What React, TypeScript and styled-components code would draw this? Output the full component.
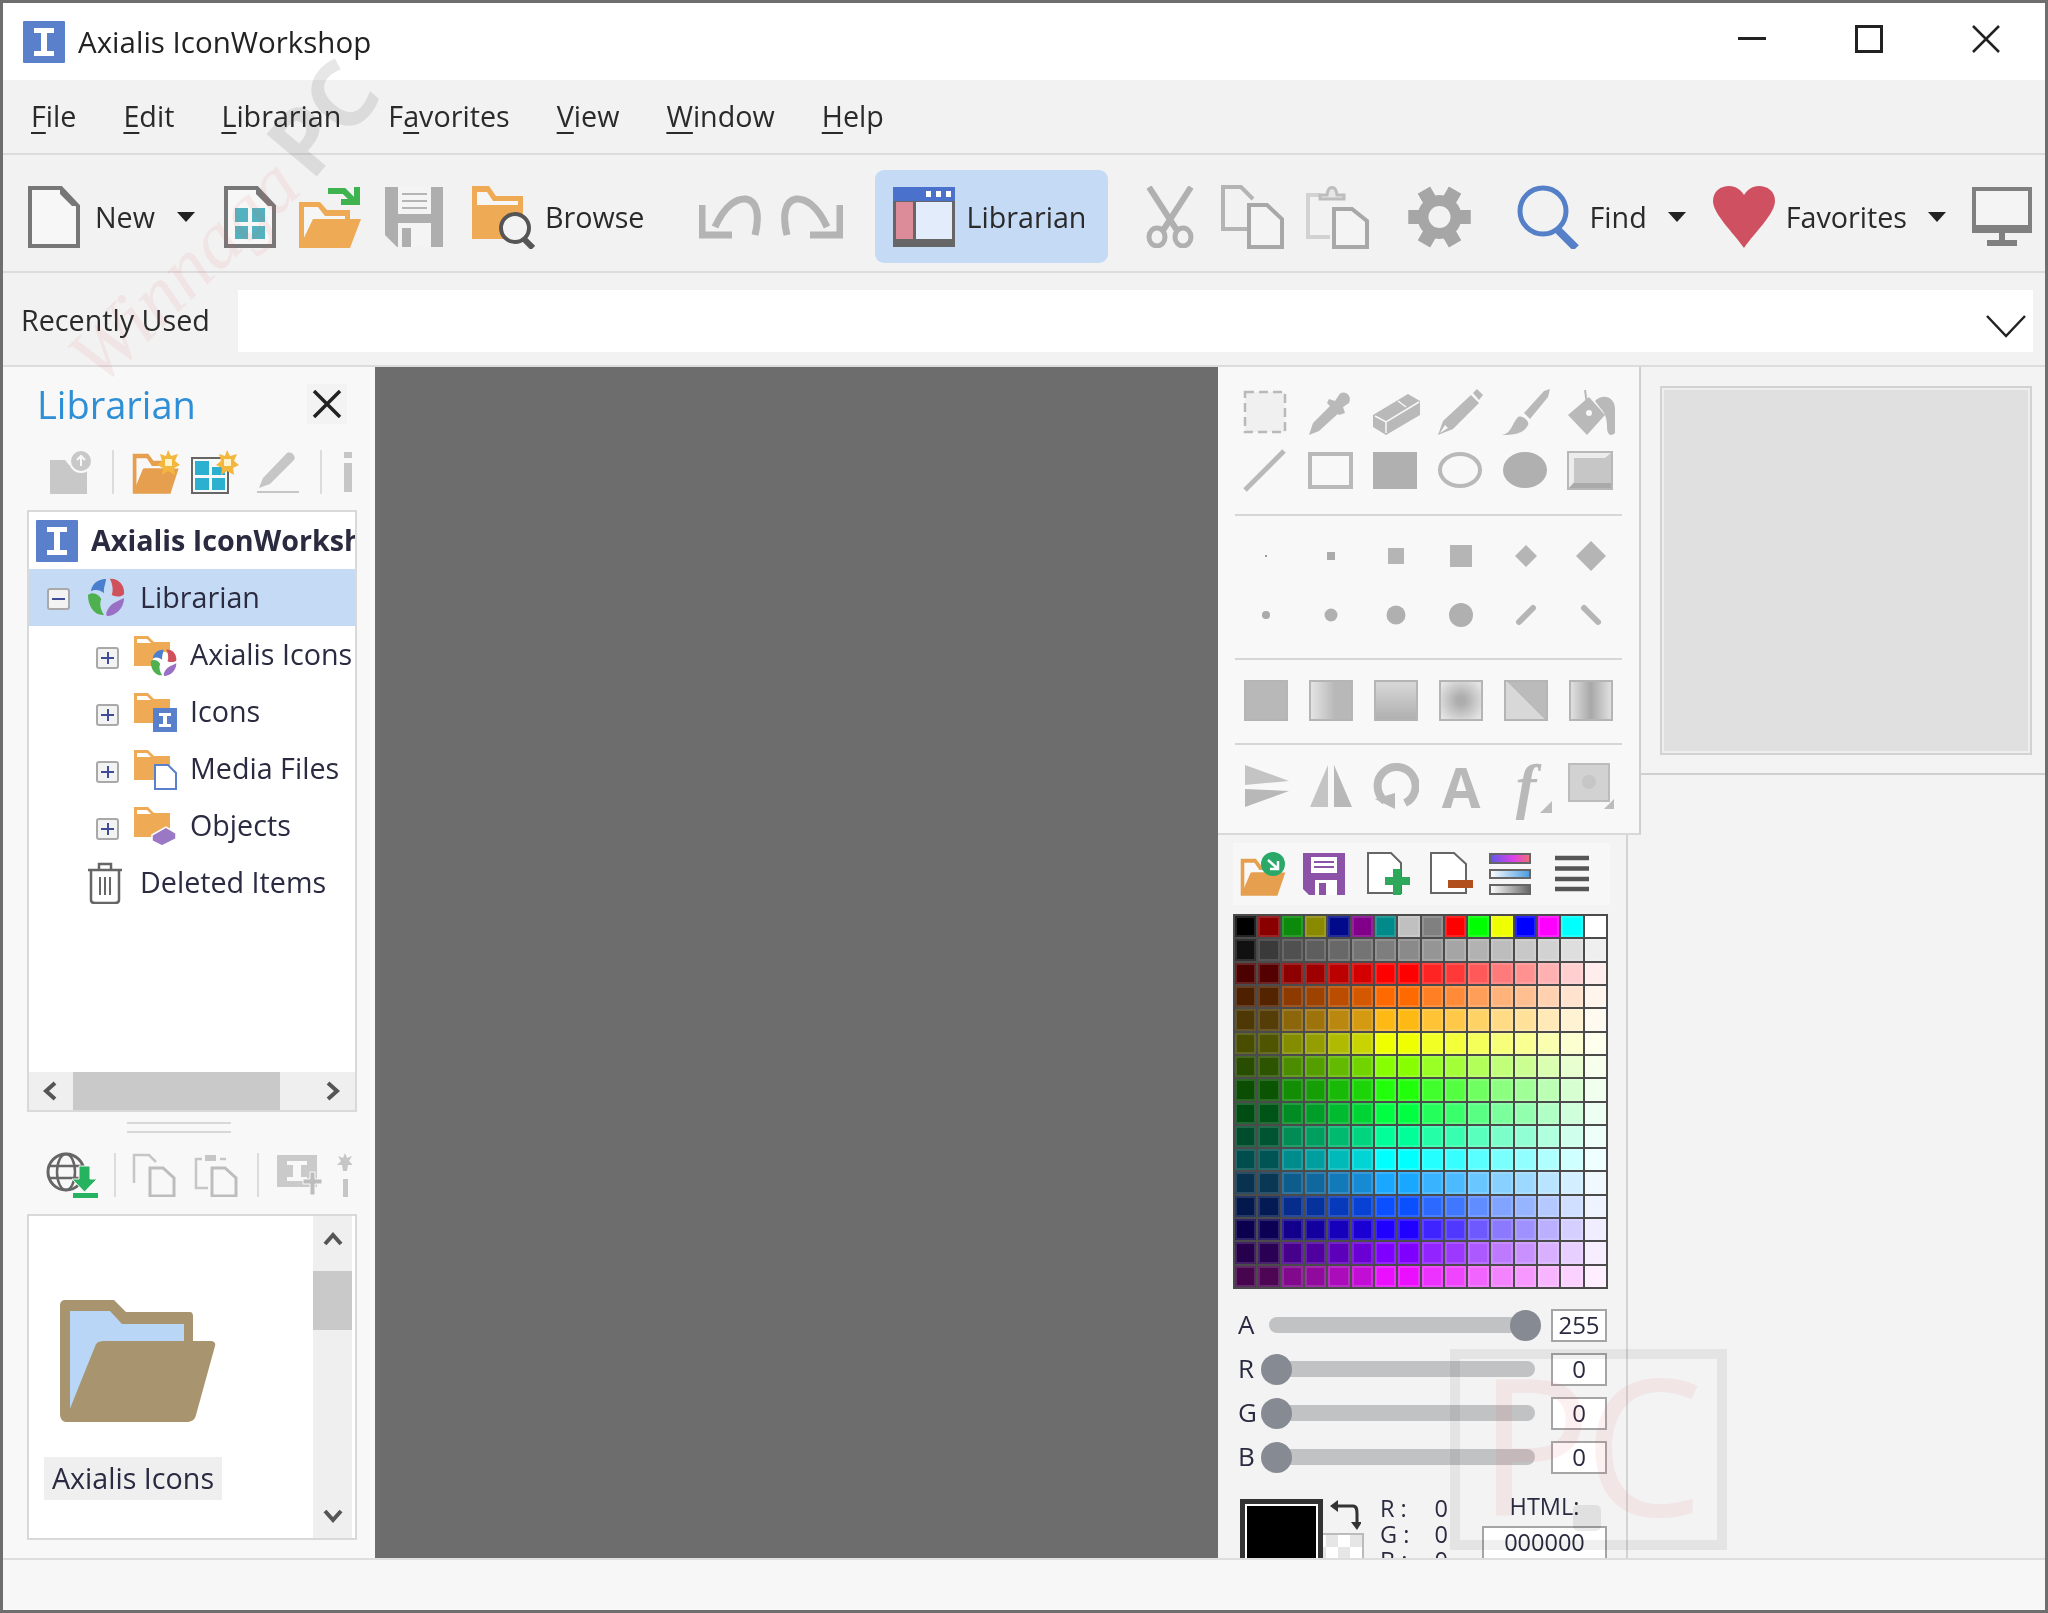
import React from "react";
import styled, { createGlobalStyle } from "styled-components";

const GlobalStyle = createGlobalStyle`
  html, body {
    margin: 0;
    padding: 0;
    width: 2048px;
    height: 1613px;
    overflow: hidden;
    background: #f3f3f3;
    font-family: "Open Sans", "Noto Sans", sans-serif;
    color: #222;
  }
  * { box-sizing: border-box; }
`;

type GlyphProps = { w: number; h: number; ml?: number; children: React.ReactNode };

const GlyphSvg = styled.svg<{ $ml: number }>`
  display: block;
  flex-shrink: 0;
  margin-left: ${({ $ml }) => $ml}px;
`;

const Glyph: React.FC<GlyphProps> = ({ w, h, ml = 0, children }) => (
  <GlyphSvg $ml={ml} width={w} height={h} viewBox={`0 0 ${w} ${h}`}>
    {children}
  </GlyphSvg>
);

const Logo: React.FC<{ size: number }> = ({ size }) => (
  <Glyph w={size} h={size}>
    <g transform={`scale(${size / 42})`}>
      <rect width="42" height="42" rx="1" fill="#5a80cc" />
      <path d="M11 7H31V12H24V30H31V35H11V30H18V12H11Z" fill="#fff" />
    </g>
  </Glyph>
);

const FolderOpen: React.FC<{ body: string; inner: string }> = ({ body, inner }) => (
  <>
    <path d="M1 1H22L29 9H52V47H1Z" fill={body} />
    <path d="M6 6H20L27 15H47V18H17L6 40Z" fill={inner} />
    <path d="M15 18H63L52 47H1Z" fill={body} />
  </>
);

const Swirl: React.FC<{ size: number }> = ({ size }) => (
  <g transform={`scale(${size / 40})`}>
    <path d="M20 1C15 1 6 3 4 14C9 11 15 13 18 16C17 10 20 5 20 1Z" fill="#4a7fd0" />
    <path d="M24 1C31 0 40 6 39 17C36 20 30 20 26 18C28 13 27 6 24 1Z" fill="#d0505c" />
    <path d="M1 18C6 14 12 17 15 22C13 27 14 33 18 39C8 40 1 30 1 18Z" fill="#4fb04f" />
    <path d="M39 21C39 32 30 40 21 40C19 37 22 33 24 30C27 26 33 24 39 21Z" fill="#9a70c4" />
  </g>
);

const DocShape: React.FC = () => (
  <>
    <path d="M2 2H33L50 20V60H2Z" fill="#f7f7f7" stroke="#777" strokeWidth="4" />
    <path d="M32 2L50 20H44L32 8Z" fill="#777" />
  </>
);

const NewIcon = () => (
  <Glyph w={52} h={62} ml={25}>
    <DocShape />
  </Glyph>
);

const TemplateIcon = () => (
  <Glyph w={52} h={62} ml={29}>
    <DocShape />
    <rect x="11" y="22" width="13" height="14" fill="#53b2bf" />
    <rect x="28" y="22" width="13" height="14" fill="#53b2bf" />
    <rect x="11" y="40" width="13" height="13" fill="#53b2bf" />
    <rect x="28" y="40" width="13" height="13" fill="#53b2bf" />
  </Glyph>
);

const OpenIcon = () => (
  <Glyph w={64} h={64} ml={22}>
    <g transform="translate(0 16)">
      <FolderOpen body="#efaa55" inner="#f6f6f6" />
    </g>
    <path d="M30 6H46L56 16" fill="none" stroke="#3fb34f" strokeWidth="6" />
    <path d="M43 20H62V2H56V14H43Z" fill="#3fb34f" />
  </Glyph>
);

const SaveIcon = () => (
  <Glyph w={58} h={60} ml={23}>
    <path d="M0 0H58V60H12L0 48Z" fill="#aeaeae" />
    <rect x="13" y="0" width="33" height="27" fill="#f4f4f4" />
    <path d="M17 7H42M17 14H42M17 21H42" stroke="#b5b5b5" strokeWidth="2" />
    <rect x="13" y="36" width="33" height="24" fill="#f4f4f4" />
    <rect x="17" y="41" width="9" height="19" fill="#aeaeae" />
  </Glyph>
);

const BrowseIcon = () => (
  <Glyph w={64} h={64} ml={28}>
    <path d="M1 1H18L25 11H52V54H1Z" fill="#efaa55" />
    <path d="M6 7H16L22 16H47V20H6Z" fill="#f6f6f6" />
    <circle cx="44" cy="43" r="14" fill="#f3f3f3" stroke="#555" strokeWidth="4" />
    <path d="M52 53L62 63" stroke="#555" strokeWidth="6" />
  </Glyph>
);

const UndoIcon: React.FC<{ flip?: boolean; ml: number }> = ({ flip, ml }) => (
  <Glyph w={63} h={44} ml={ml}>
    <g transform={flip ? "translate(63 0) scale(-1 1)" : undefined} fill="none" stroke="#b4b4b4">
      <path d="M16 32C26 10 38 3 47 4C58 6 61 20 56 40" strokeWidth="7" />
      <path d="M3 10V40H33" strokeWidth="7" />
    </g>
  </Glyph>
);

const LibrarianIcon = () => (
  <Glyph w={62} h={60}>
    <rect width="62" height="60" fill="#666" />
    <rect width="62" height="14" fill="#4a72cc" />
    <rect x="3" y="15" width="17" height="37" fill="#dc8b99" />
    <rect x="23" y="15" width="36" height="37" fill="#e3ecfb" />
    <path d="M33 4H38V10H33ZM43 4H48V10H43ZM53 4H58V10H53Z" fill="#fff" />
  </Glyph>
);

const ScissorsIcon = () => (
  <Glyph w={48} h={62} ml={38}>
    <g fill="none" stroke="#b0b0b0">
      <path d="M3 1L32 46M45 1L16 46" strokeWidth="6" />
      <ellipse cx="11" cy="51" rx="8" ry="9" strokeWidth="5" />
      <ellipse cx="37" cy="51" rx="8" ry="9" strokeWidth="5" />
    </g>
  </Glyph>
);

const CopyIcon = () => (
  <Glyph w={63} h={64} ml={27}>
    <path d="M28 44H2V2H20L32 14" fill="none" stroke="#b4b4b4" strokeWidth="4" />
    <path d="M28 20H46L61 34V62H28Z" fill="#f4f4f4" stroke="#a8a8a8" strokeWidth="4" />
  </Glyph>
);

const PasteIcon = () => (
  <Glyph w={63} h={64} ml={22}>
    <path d="M14 10H2V52H24" fill="none" stroke="#d2d2d2" strokeWidth="4" />
    <path d="M14 14H38V10H31C30 0 22 0 21 10H14Z" fill="#e6e6e6" stroke="#bdbdbd" strokeWidth="3" />
    <path d="M28 24H46L61 36V62H28Z" fill="#f4f4f4" stroke="#a8a8a8" strokeWidth="4" />
  </Glyph>
);

const GearIcon = () => (
  <Glyph w={63} h={62} ml={39}>
    <g transform="translate(31.5 31)" fill="#a6a6a6">
      {[0, 60, 120, 180, 240, 300].map((a) => (
        <rect key={a} x="-7" y="-31" width="14" height="62" transform={`rotate(${a + 30})`} />
      ))}
      <circle r="22" />
      <circle r="11" fill="#f2f2f2" />
    </g>
  </Glyph>
);

const FindIcon = () => (
  <Glyph w={63} h={64} ml={46}>
    <circle cx="26" cy="26" r="23" fill="none" stroke="#5580c8" strokeWidth="5" />
    <path d="M40 44L59 63" stroke="#5580c8" strokeWidth="8" />
  </Glyph>
);

const HeartIcon = () => (
  <Glyph w={62} h={62} ml={27}>
    <path d="M31 62C20 46 0 28 0 15C0 5 8 0 16 0C23 0 28 4 31 9C34 4 39 0 46 0C54 0 62 5 62 15C62 28 42 46 31 62Z" fill="#cf5060" />
  </Glyph>
);

const MonitorIcon = () => (
  <Glyph w={60} h={60} ml={26}>
    <rect x="2" y="2" width="56" height="42" fill="#f4f4f4" stroke="#808080" strokeWidth="4" />
    <rect y="38" width="60" height="8" fill="#808080" />
    <rect x="27" y="46" width="6" height="8" fill="#808080" />
    <rect x="15" y="53" width="30" height="6" fill="#808080" />
  </Glyph>
);

const TOOL = "#b9b9b9";

const drawTools: React.ReactNode[] = [
  <>
    <rect x="3" y="3" width="40" height="40" fill="#f0f0f0" stroke={TOOL} strokeWidth="2.5" strokeDasharray="9 5" />
  </>,
  <>
    <path d="M2 46L6 34L26 14L34 22L12 42Z" fill={TOOL} />
    <path d="M22 10L28 12L32 6C36 0 46 6 42 14L36 18L38 24L32 26L20 14Z" fill={TOOL} />
  </>,
  <>
    <path d="M1 26L36 5L48 12V26L14 46L1 38Z" fill={TOOL} />
    <path d="M3 27L14 33L47 13M14 33V44M26 12L34 18" stroke="#f8f8f8" strokeWidth="1.5" fill="none" />
  </>,
  <>
    <path d="M1 46L6 32L34 6L42 14L16 40Z" fill={TOOL} />
    <path d="M36 4L40 0L46 6L42 11Z" fill={TOOL} />
    <path d="M3 44L8 36L11 39Z" fill="#f8f8f8" />
  </>,
  <>
    <path d="M22 24L42 2L48 0L46 8L28 30Z" fill={TOOL} />
    <path d="M0 46C10 44 10 34 16 28C20 26 28 32 26 36C22 44 14 46 0 46Z" fill={TOOL} />
  </>,
  <>
    <path d="M1 26L22 8L38 26L20 46Z" fill={TOOL} />
    <path d="M28 12C36 4 48 8 48 20V44C44 48 40 46 40 38C40 30 38 24 34 20Z" fill={TOOL} />
    <path d="M18 1L21 22" stroke={TOOL} strokeWidth="2" />
    <circle cx="22" cy="24" r="3" fill="#f8f8f8" />
  </>,
  <>
    <path d="M3 42L42 3" stroke={TOOL} strokeWidth="5" />
  </>,
  <>
    <rect x="3" y="6" width="41" height="33" fill="none" stroke={TOOL} strokeWidth="4" />
  </>,
  <>
    <rect x="1" y="4" width="44" height="37" fill="#b0b0b0" />
  </>,
  <>
    <ellipse cx="23" cy="22" rx="20" ry="16" fill="none" stroke={TOOL} strokeWidth="4" />
  </>,
  <>
    <ellipse cx="23" cy="22" rx="22" ry="18" fill="#b0b0b0" />
  </>,
  <>
    <rect x="1" y="4" width="44" height="37" fill="#c6c6c6" />
    <path d="M1 4H45L38 10H7V34L1 41Z" fill="#ececec" />
    <path d="M1 41L7 35H45V41Z" fill="#aaa" />
    <rect x="1" y="4" width="44" height="37" fill="none" stroke="#b8b8b8" strokeWidth="2" />
  </>,
];

const brushTools: React.ReactNode[] = [
  <rect x="22" y="22" width="2" height="2" fill="#999" />,
  <rect x="19" y="19" width="8" height="8" fill="#ababab" />,
  <rect x="15" y="15" width="16" height="16" fill="#b5b5b5" />,
  <rect x="12" y="12" width="22" height="22" fill="#b5b5b5" />,
  <path d="M23 12L34 23L23 34L12 23Z" fill="#b5b5b5" />,
  <path d="M23 8L38 23L23 38L8 23Z" fill="#b5b5b5" />,
  <circle cx="23" cy="23" r="4" fill="#aaa" />,
  <circle cx="23" cy="23" r="6.5" fill="#b0b0b0" />,
  <circle cx="23" cy="23" r="9.5" fill="#b0b0b0" />,
  <circle cx="23" cy="23" r="12" fill="#b0b0b0" />,
  <path d="M16 30L30 16" stroke="#b5b5b5" strokeWidth="6" strokeLinecap="round" />,
  <path d="M16 16L30 30" stroke="#b5b5b5" strokeWidth="6" strokeLinecap="round" />,
];

const gradients = [
  "#b8b8b8",
  "linear-gradient(90deg, #e4e4e4, #b8b8b8 60%)",
  "linear-gradient(180deg, #d8d8d8, #b0b0b0)",
  "radial-gradient(circle, #adadad 15%, #e4e4e4 90%)",
  "linear-gradient(45deg, #d8d8d8 50%, #bbb 50%)",
  "linear-gradient(90deg, #e0e0e0, #a8a8a8 50%, #e0e0e0)",
];

const Corner = () => <path d="M36 46L46 36V46Z" fill="#bcbcbc" />;

const effectTools: React.ReactNode[] = [
  <>
    <path d="M2 2L46 18L2 22Z" fill="#c4c4c4" />
    <path d="M2 26L46 28L2 44Z" fill="#b8b8b8" />
  </>,
  <>
    <path d="M20 2V44H2Z" fill="#c4c4c4" />
    <path d="M26 2V44H44Z" fill="#b8b8b8" />
  </>,
  <>
    <path d="M12 38A19 19 0 1 1 32 40" fill="none" stroke={TOOL} strokeWidth="8" />
    <path d="M2 36L22 30L22 46Z" fill={TOOL} />
  </>,
  <></>,
  <></>,
  <>
    <rect x="1" y="1" width="40" height="37" fill="#d2d2d2" stroke="#bcbcbc" strokeWidth="2" />
    <circle cx="21" cy="19" r="7" fill="#c6c6c6" />
    <Corner />
  </>,
];

const SmallFolder: React.FC<{ children?: React.ReactNode }> = ({ children }) => (
  <Glyph w={43} h={42} ml={15}>
    <path d="M0 2H14L20 8H36V32H0Z" fill="#efaa55" />
    <path d="M3 5H13L17 9H3Z" fill="#fff" />
    {children}
  </Glyph>
);

const Window = styled.div`
  position: relative;
  width: 2048px;
  height: 1613px;
  border: 3px solid #6e6e6e;
  display: flex;
  flex-direction: column;
  overflow: hidden;
  background: #f3f3f3;
  filter: blur(0.5px);
`;

const TitleBar = styled.div`
  height: 77px;
  flex-shrink: 0;
  background: #fff;
  display: flex;
  align-items: center;
  padding-left: 20px;
`;

const TitleText = styled.div`
  margin-left: 13px;
  margin-top: -1px;
  font-size: 29.5px;
  color: #222;
`;

const WindowControls = styled.div`
  margin-left: auto;
  display: flex;
  align-items: center;
  padding-right: 45px;
  gap: 89px;
  margin-top: -6px;
`;

const MenuBar = styled.div`
  height: 75px;
  flex-shrink: 0;
  display: flex;
  align-items: center;
  gap: 47px;
  padding: 0 0 2px 28px;
  background: #f2f2f2;
  border-bottom: 2px solid #dcdcdc;
`;

const MenuItem = styled.span`
  font-size: 28.7px;
  color: #2a2a2a;
  u { text-underline-offset: 5px; text-decoration-thickness: 2px; }
`;

const Toolbar = styled.div`
  height: 118px;
  flex-shrink: 0;
  display: flex;
  align-items: center;
  padding-top: 7px;
  background: #f2f2f2;
  border-bottom: 2px solid #dcdcdc;
`;

const ToolLabel = styled.span<{ $ml: number }>`
  font-size: 28.7px;
  margin-left: ${({ $ml }) => $ml}px;
  color: #2a2a2a;
  white-space: nowrap;
`;

const DropArrow = styled.span<{ $ml: number }>`
  margin-left: ${({ $ml }) => $ml}px;
  width: 0;
  height: 0;
  border-left: 9px solid transparent;
  border-right: 9px solid transparent;
  border-top: 10px solid #222;
`;

const ToggleButton = styled.div`
  margin-left: 32px;
  width: 233px;
  height: 93px;
  flex-shrink: 0;
  background: #c5daf4;
  border-radius: 9px;
  display: flex;
  align-items: center;
  padding-left: 18px;
`;

const RecentBar = styled.div`
  height: 94px;
  flex-shrink: 0;
  display: flex;
  align-items: center;
  padding: 3px 12px 0 0;
  background: #f2f2f2;
  border-bottom: 2px solid #dcdcdc;
`;

const RecentLabel = styled.span`
  font-size: 28.7px;
  width: 235px;
  padding-left: 18px;
  margin-top: -3px;
  color: #2a2a2a;
`;

const Combo = styled.div`
  flex: 1;
  height: 62px;
  background: #fff;
  display: flex;
  align-items: center;
  justify-content: flex-end;
  padding-right: 7px;
  padding-top: 13px;
`;

const Main = styled.div`
  flex: 1;
  min-height: 0;
  display: flex;
  overflow: hidden;
`;

const LeftPanel = styled.div`
  width: 372px;
  flex-shrink: 0;
  background: #f8f8f8;
  display: flex;
  flex-direction: column;
  overflow: hidden;
`;

const PanelHead = styled.div`
  height: 73px;
  flex-shrink: 0;
  display: flex;
  align-items: center;
  justify-content: space-between;
  padding: 0 28px 0 34px;
`;

const PanelTitle = styled.div`
  font-size: 38px;
  color: #2e8ed6;
`;

const CloseBox = styled.div`
  width: 40px;
  height: 40px;
  background: #f3f3f3;
  display: flex;
  align-items: center;
  justify-content: center;
`;

const MiniToolbar = styled.div<{ $h: number }>`
  height: ${({ $h }) => $h}px;
  width: 349px;
  flex-shrink: 0;
  display: flex;
  align-items: center;
  overflow: hidden;
`;

const MiniSep = styled.div<{ $ml: number }>`
  width: 2px;
  height: 44px;
  flex-shrink: 0;
  background: #dcdcdc;
  margin-left: ${({ $ml }) => $ml}px;
`;

const TreeBox = styled.div`
  margin: 7px 0 0 24px;
  width: 330px;
  height: 602px;
  flex-shrink: 0;
  border: 2px solid #d9d9d9;
  background: #fff;
  display: flex;
  flex-direction: column;
  overflow: hidden;
`;

const TreeList = styled.div`
  flex: 1;
  min-height: 0;
`;

const TreeRow = styled.div<{ $pad: number; $selected?: boolean }>`
  height: 57px;
  display: flex;
  align-items: center;
  padding-left: ${({ $pad }) => $pad}px;
  background: ${({ $selected }) => ($selected ? "#c5daf4" : "transparent")};
  white-space: nowrap;
  overflow: hidden;
`;

const TreeLabel = styled.span<{ $ml: number; $bold?: boolean }>`
  font-size: 28.7px;
  margin-left: ${({ $ml }) => $ml}px;
  margin-top: -2px;
  font-weight: ${({ $bold }) => ($bold ? 700 : 400)};
  color: #2a2a40;
`;

const Expander = styled.div<{ $open?: boolean }>`
  position: relative;
  width: 23px;
  height: 22px;
  margin-top: ${({ $open }) => ($open ? 3 : 6)}px;
  flex-shrink: 0;
  border: 2px solid #a9a9a9;
  border-radius: 3px;
  background: #f3f3f3;
  &::before {
    content: "";
    position: absolute;
    left: 3px;
    right: 3px;
    top: 8px;
    height: 2px;
    background: #3f4d96;
  }
  &::after {
    content: "";
    display: ${({ $open }) => ($open ? "none" : "block")};
    position: absolute;
    top: 3px;
    bottom: 3px;
    left: 8.5px;
    width: 2px;
    background: #3f4d96;
  }
`;

const HScroll = styled.div`
  height: 38px;
  flex-shrink: 0;
  background: #efefef;
  display: flex;
  align-items: center;
`;

const HThumb = styled.div`
  width: 207px;
  height: 38px;
  margin-left: 16px;
  background: #c9c9c9;
`;

const Splitter = styled.div`
  height: 39px;
  flex-shrink: 0;
  display: flex;
  align-items: center;
  padding: 0 0 0 124px;
  &::before {
    content: "";
    width: 104px;
    height: 7px;
    border-top: 2px solid #d8d8d8;
    border-bottom: 2px solid #d8d8d8;
    margin-top: -8px;
  }
`;

const PreviewBox = styled.div`
  margin: 16px 0 0 24px;
  width: 330px;
  height: 326px;
  flex-shrink: 0;
  border: 2px solid #d9d9d9;
  background: #fff;
  display: flex;
`;

const PreviewItems = styled.div`
  flex: 1;
  display: flex;
  flex-direction: column;
  padding: 84px 0 0 15px;
`;

const ItemCaption = styled.div`
  width: 178px;
  height: 43px;
  margin-top: 35px;
  background: #efefef;
  font-size: 28.7px;
  line-height: 41px;
  text-align: center;
  white-space: nowrap;
  color: #2a2a40;
`;

const VScroll = styled.div`
  width: 39px;
  margin-right: 3px;
  background: #efefef;
  display: flex;
  flex-direction: column;
  align-items: center;
`;

const VThumb = styled.div`
  width: 39px;
  height: 59px;
  margin: 10px 0 auto;
  background: #c9c9c9;
`;

const ArrowSlot = styled.div<{ $h: number }>`
  height: ${({ $h }) => $h}px;
  display: flex;
  align-items: center;
`;

const Canvas = styled.div`
  flex: 1;
  min-width: 0;
  background: #6d6d6d;
`;

const ToolColumn = styled.div`
  width: 423px;
  flex-shrink: 0;
  display: flex;
  flex-direction: column;
  overflow: hidden;
`;

const ToolPanel = styled.div`
  height: 468px;
  flex-shrink: 0;
  background: #f8f8f8;
  border-right: 2px solid #cfcfcf;
  border-bottom: 2px solid #d8d8d8;
`;

const ToolGrid = styled.div<{ $top: number; $bottom: number }>`
  display: grid;
  grid-template-columns: repeat(6, 64.9px);
  grid-auto-rows: 59.5px;
  padding: ${({ $top, $bottom }) => `${$top}px 0 ${$bottom}px 16px`};
  place-items: center;
`;

const ToolSep = styled.div`
  height: 2px;
  margin: 0 17px;
  background: #d6d6d6;
`;

const GradientSwatch = styled.div<{ $fill: string }>`
  width: 44px;
  height: 41px;
  border: 2px solid #b5b5b5;
  background: ${({ $fill }) => $fill};
`;

const EffectLetter = styled.span<{ $italic?: boolean }>`
  position: relative;
  font-size: ${({ $italic }) => ($italic ? 62 : 56)}px;
  line-height: 46px;
  font-weight: 700;
  color: ${TOOL};
  font-style: ${({ $italic }) => ($italic ? "italic" : "normal")};
  font-family: ${({ $italic }) => ($italic ? '"Liberation Serif", serif' : '"Open Sans", sans-serif')};
  &::after {
    content: "";
    display: ${({ $italic }) => ($italic ? "block" : "none")};
    position: absolute;
    right: -16px;
    bottom: -4px;
    border-left: 12px solid transparent;
    border-bottom: 12px solid #bcbcbc;
  }
`;

const ColorPanel = styled.div`
  flex: 1;
  min-height: 0;
  width: 410px;
  background: #f3f3f3;
  border-right: 2px solid #d3d3d3;
  padding: 8px 0 0 15px;
  overflow: hidden;
`;

const ColorTools = styled.div`
  width: 377px;
  height: 62px;
  background: #f7f7f7;
  display: flex;
  align-items: center;
`;

const Palette = styled.div`
  margin-top: 9px;
  width: 375px;
  height: 375px;
  padding: 2px;
  background: #4b4b4b;
  display: grid;
  grid-template-columns: repeat(16, 1fr);
  grid-template-rows: repeat(16, 1fr);
  gap: 2px;
`;

const PaletteCell = styled.div`
  box-shadow: inset 0 0 0 2px rgba(255, 255, 255, 0.14);
`;

const SliderRows = styled.div`
  margin-top: 14px;
`;

const SliderRow = styled.div`
  height: 44px;
  display: flex;
  align-items: center;
`;

const SliderLabel = styled.div`
  width: 36px;
  padding-left: 5px;
  margin-top: -3px;
  font-size: 26px;
  color: #2a2a40;
`;

const SliderTrack = styled.div`
  position: relative;
  width: 266px;
  height: 16px;
  border-radius: 8px;
  background: #c1c2c4;
`;

const SliderThumb = styled.div`
  position: absolute;
  top: 50%;
  width: 31px;
  height: 31px;
  margin: -15.5px 0 0 -15.5px;
  border-radius: 50%;
  background: #868a93;
`;

const ValueBox = styled.div`
  margin-left: 16px;
  width: 56px;
  height: 33px;
  border: 2px solid #a5a5a5;
  background: #fff;
  font-size: 24px;
  line-height: 27px;
  text-align: center;
  color: #2a2a40;
`;

const ColorInfo = styled.div`
  margin-top: 20px;
  display: flex;
  align-items: flex-start;
`;

const SwatchStack = styled.div`
  position: relative;
  margin-left: 7px;
  width: 124px;
  height: 80px;
  flex-shrink: 0;
`;

const ForeSwatch = styled.div`
  position: absolute;
  left: 0;
  top: 0;
  width: 83px;
  height: 80px;
  border: 5px solid #333;
  outline: 2px solid #fff;
  outline-offset: -7px;
  background: #000;
  z-index: 1;
`;

const BackSwatch = styled.div`
  position: absolute;
  left: 60px;
  top: 34px;
  width: 64px;
  height: 50px;
  border: 2px solid #bbb;
  background: conic-gradient(#fff 25%, #e6e6e6 0 50%, #fff 0 75%, #e6e6e6 0) 0 0 / 24px 24px;
`;

const SwapArrows = styled.div`
  position: absolute;
  left: 89px;
  top: 1px;
`;

const Readout = styled.div`
  margin: -4px 0 0 16px;
  width: 68px;
  display: grid;
  grid-template-columns: 1fr auto;
  grid-auto-rows: 26px;
  font-size: 23.5px;
  line-height: 26px;
  color: #2a2a40;
`;

const HtmlColumn = styled.div`
  margin-left: 34px;
  width: 125px;
  text-align: center;
  font-size: 23.5px;
  line-height: 26px;
  color: #2a2a40;
  margin-top: -6px;
`;

const HtmlInput = styled.div`
  margin-top: 7px;
  height: 48px;
  border: 2px solid #a5a5a5;
  background: #fff;
  line-height: 28px;
`;

const PreviewColumn = styled.div`
  width: 404px;
  flex-shrink: 0;
  background: #f3f3f3;
`;

const PreviewArea = styled.div`
  height: 408px;
  padding: 19px 10px 0 19px;
  border-bottom: 2px solid #cfcfcf;
`;

const PreviewFrame = styled.div`
  width: 372px;
  height: 369px;
  border: 2px solid #d2d2d2;
  outline: 2px solid #eee;
  outline-offset: -4px;
  background: #e0e0e0;
`;

const StatusBar = styled.div`
  height: 52px;
  flex-shrink: 0;
  background: #f7f7f7;
  border-top: 2px solid #dedede;
`;

const WatermarkGray = styled.div`
  position: absolute;
  left: 262px;
  top: 68px;
  font-size: 92px;
  line-height: 94px;
  font-weight: 700;
  letter-spacing: -3px;
  color: rgba(60, 60, 60, 0.12);
  transform: rotate(-50deg);
  pointer-events: none;
`;

const WatermarkScript = styled.div`
  position: absolute;
  left: 38px;
  top: 222px;
  font-family: "Liberation Serif", serif;
  font-style: italic;
  font-size: 80px;
  line-height: 90px;
  color: rgba(238, 90, 100, 0.09);
  transform: rotate(-44deg);
  pointer-events: none;
`;

const WatermarkFrame = styled.div`
  position: absolute;
  left: 1447px;
  top: 1346px;
  width: 277px;
  height: 201px;
  border: 10px solid rgba(0, 0, 0, 0.06);
  pointer-events: none;
  display: flex;
  align-items: center;
  justify-content: center;
`;

const WatermarkLetters = styled.div`
  font-family: "Open Sans", sans-serif;
  font-weight: 400;
  font-size: 190px;
  line-height: 180px;
  letter-spacing: -8px;
  margin: -14px 0 0 -4px;
  color: rgba(238, 90, 100, 0.09);
`;

const WatermarkDot = styled.div`
  position: absolute;
  left: 1570px;
  top: 1502px;
  width: 28px;
  height: 26px;
  border-radius: 5px;
  background: rgba(0, 0, 0, 0.08);
  pointer-events: none;
`;

const firstRow = [
  "#000", "#8a0000", "#0b8a0b", "#8a8a00", "#000a8a", "#80008a", "#008a8a", "#c0c0c0",
  "#808080", "#f00", "#0f0", "#f0ff00", "#00f", "#f0f", "#0ff", "#fff",
];
const grayRow = [
  "#111", "#3a3a3a", "#505050", "#5e5e5e", "#686868", "#747474", "#7e7e7e", "#8a8a8a",
  "#959595", "#a5a5a5", "#b2b2b2", "#bdbdbd", "#c8c8c8", "#d2d2d2", "#dedede", "#efefef",
];
const hues: [number, number, number][] = [
  [255, 0, 0],
  [255, 106, 0],
  [255, 185, 20],
  [240, 255, 0],
  [136, 255, 0],
  [34, 255, 10],
  [0, 255, 64],
  [0, 255, 153],
  [0, 255, 255],
  [26, 167, 255],
  [10, 80, 255],
  [32, 0, 255],
  [128, 0, 255],
  [234, 16, 255],
];
const darken = [0.3, 0.33, 0.55, 0.62, 0.73, 0.83, 1, 1];
const lighten = [0.14, 0.22, 0.35, 0.48, 0.57, 0.69, 0.81, 0.93];

const hueCell = (hue: [number, number, number], col: number) => {
  const mix =
    col < 8
      ? hue.map((v) => v * darken[col])
      : hue.map((v) => v + (255 - v) * lighten[col - 8]);
  return `rgb(${mix.map(Math.round).join(",")})`;
};

const paletteColors = [
  ...firstRow,
  ...grayRow,
  ...hues.flatMap((hue) => Array.from({ length: 16 }, (_, col) => hueCell(hue, col))),
];

const sliders = [
  { name: "A", value: 255 },
  { name: "R", value: 0 },
  { name: "G", value: 0 },
  { name: "B", value: 0 },
];

const Chevron: React.FC<{ d: string; w?: number; h?: number; color?: string; sw?: number }> = ({
  d,
  w = 18,
  h = 18,
  color = "#555",
  sw = 4,
}) => (
  <Glyph w={w} h={h}>
    <path d={d} fill="none" stroke={color} strokeWidth={sw} />
  </Glyph>
);

const App: React.FC = () => {
  return (
    <>
      <GlobalStyle />
      <Window>
        <TitleBar>
          <Logo size={42} />
          <TitleText>Axialis IconWorkshop</TitleText>
          <WindowControls>
            <Glyph w={28} h={4}>
              <rect width="28" height="3" fill="#222" />
            </Glyph>
            <Glyph w={28} h={28}>
              <rect x="1.5" y="1.5" width="25" height="25" fill="none" stroke="#222" strokeWidth="3" />
            </Glyph>
            <Glyph w={28} h={28}>
              <path d="M1 1L27 27M27 1L1 27" stroke="#222" strokeWidth="2.5" />
            </Glyph>
          </WindowControls>
        </TitleBar>

        <MenuBar>
          <MenuItem><u>F</u>ile</MenuItem>
          <MenuItem><u>E</u>dit</MenuItem>
          <MenuItem><u>L</u>ibrarian</MenuItem>
          <MenuItem>F<u>a</u>vorites</MenuItem>
          <MenuItem><u>V</u>iew</MenuItem>
          <MenuItem><u>W</u>indow</MenuItem>
          <MenuItem><u>H</u>elp</MenuItem>
        </MenuBar>

        <Toolbar>
          <NewIcon />
          <ToolLabel $ml={15}>New</ToolLabel>
          <DropArrow $ml={22} />
          <TemplateIcon />
          <OpenIcon />
          <SaveIcon />
          <BrowseIcon />
          <ToolLabel $ml={10}>Browse</ToolLabel>
          <UndoIcon ml={55} />
          <UndoIcon ml={18} flip />
          <ToggleButton>
            <LibrarianIcon />
            <ToolLabel $ml={11}>Librarian</ToolLabel>
          </ToggleButton>
          <ScissorsIcon />
          <CopyIcon />
          <PasteIcon />
          <GearIcon />
          <FindIcon />
          <ToolLabel $ml={9}>Find</ToolLabel>
          <DropArrow $ml={21} />
          <HeartIcon />
          <ToolLabel $ml={11}>Favorites</ToolLabel>
          <DropArrow $ml={21} />
          <MonitorIcon />
        </Toolbar>

        <RecentBar>
          <RecentLabel>Recently Used</RecentLabel>
          <Combo>
            <Chevron d="M1 1L20 21L39 1" w={40} h={24} color="#222" sw={2.5} />
          </Combo>
        </RecentBar>

        <Main>
          <LeftPanel>
            <PanelHead>
              <PanelTitle>Librarian</PanelTitle>
              <CloseBox>
                <Glyph w={30} h={28}>
                  <path d="M2 1L28 27M28 1L2 27" stroke="#222" strokeWidth="3.5" />
                </Glyph>
              </CloseBox>
            </PanelHead>

            <MiniToolbar $h={63}>
              <Glyph w={44} h={44} ml={46}>
                <path d="M1 10H16L20 15H38V44H1Z" fill="#c8c8c8" />
                <circle cx="32" cy="11" r="11" fill="#c8c8c8" stroke="#f8f8f8" strokeWidth="2" />
                <path d="M32 16V7M28 10L32 6L36 10" stroke="#f8f8f8" strokeWidth="2" fill="none" />
              </Glyph>
              <MiniSep $ml={19} />
              <Glyph w={48} h={44} ml={18}>
                <g transform="translate(0 3) scale(0.74 0.86)">
                  <FolderOpen body="#e69f4e" inner="#f8f8f8" />
                </g>
                <path d="M36 0L39 6L46 4L43 11L48 15L42 18L43 25L36 21L30 25L31 18L25 15L30 11L28 4L34 6Z" fill="#f3b73d" />
                <rect x="33" y="9" width="7" height="7" fill="#fff3cc" />
              </Glyph>
              <Glyph w={48} h={44} ml={11}>
                <rect x="1" y="8" width="36" height="35" fill="#f8f8f8" stroke="#666" strokeWidth="2" />
                <path d="M4 11H18V25H4ZM21 17H34V25H21ZM4 28H18V40H4ZM21 28H34V40H21Z" fill="#2cb0d0" />
                <path d="M36 0L39 6L46 4L43 11L48 15L42 18L43 25L36 21L30 25L31 18L25 15L30 11L28 4L34 6Z" fill="#f3b73d" />
                <rect x="33" y="9" width="7" height="7" fill="#fff3cc" />
              </Glyph>
              <Glyph w={42} h={44} ml={18}>
                <path d="M6 28L30 3C33 0 40 6 37 10L13 34L2 38Z" fill="#c6c6c6" />
                <path d="M0 42H42" stroke="#c6c6c6" strokeWidth="2" />
              </Glyph>
              <MiniSep $ml={21} />
              <Glyph w={9} h={40} ml={22}>
                <rect width="9" height="6" fill="#c6c6c6" />
                <rect y="11" width="9" height="29" fill="#c6c6c6" />
              </Glyph>
            </MiniToolbar>

            <TreeBox>
              <TreeList>
                <TreeRow $pad={7}>
                  <Logo size={42} />
                  <TreeLabel $ml={13} $bold>Axialis IconWorkshop</TreeLabel>
                </TreeRow>
                <TreeRow $pad={18} $selected>
                  <Expander $open />
                  <Glyph w={38} h={40} ml={17}>
                    <Swirl size={38} />
                  </Glyph>
                  <TreeLabel $ml={15}>Librarian</TreeLabel>
                </TreeRow>
                <TreeRow $pad={67}>
                  <Expander />
                  <SmallFolder>
                    <circle cx="30" cy="30" r="12" fill="#fff" />
                    <g transform="translate(16 15)">
                      <Swirl size={27} />
                    </g>
                  </SmallFolder>
                  <TreeLabel $ml={13}>Axialis Icons</TreeLabel>
                </TreeRow>
                <TreeRow $pad={67}>
                  <Expander />
                  <SmallFolder>
                    <rect x="19" y="17" width="24" height="24" fill="#5a80cc" />
                    <path d="M25 22H37V25H33V33H37V36H25V33H29V25H25Z" fill="#fff" />
                  </SmallFolder>
                  <TreeLabel $ml={13}>Icons</TreeLabel>
                </TreeRow>
                <TreeRow $pad={67}>
                  <Expander />
                  <SmallFolder>
                    <path d="M21 17H34L42 25V41H21Z" fill="#fff" stroke="#5a80cc" strokeWidth="2" />
                  </SmallFolder>
                  <TreeLabel $ml={13}>Media Files</TreeLabel>
                </TreeRow>
                <TreeRow $pad={67}>
                  <Expander />
                  <SmallFolder>
                    <path d="M18 30L32 22L42 28V34L28 41L18 36Z" fill="#9a78c6" stroke="#fff" strokeWidth="1.5" />
                  </SmallFolder>
                  <TreeLabel $ml={13}>Objects</TreeLabel>
                </TreeRow>
                <TreeRow $pad={59}>
                  <Glyph w={34} h={42}>
                    <path d="M0 8H34M11 8V2H23V8" fill="none" stroke="#666" strokeWidth="2.5" />
                    <path d="M3 9V38C3 40 5 41 7 41H27C29 41 31 40 31 38V9" fill="none" stroke="#666" strokeWidth="2.5" />
                    <path d="M12 15V33M17 15V33M22 15V33" stroke="#666" strokeWidth="2" />
                  </Glyph>
                  <TreeLabel $ml={18}>Deleted Items</TreeLabel>
                </TreeRow>
              </TreeList>
              <HScroll>
                <ArrowSlot $h={38}>
                  <GlyphSvg $ml={12} width={16} height={20} viewBox="0 0 16 20">
                    <path d="M14 2L5 10L14 18" fill="none" stroke="#555" strokeWidth="4" />
                  </GlyphSvg>
                </ArrowSlot>
                <HThumb />
                <ArrowSlot $h={38}>
                  <GlyphSvg $ml={46} width={16} height={20} viewBox="0 0 16 20">
                    <path d="M2 2L11 10L2 18" fill="none" stroke="#555" strokeWidth="4" />
                  </GlyphSvg>
                </ArrowSlot>
              </HScroll>
            </TreeBox>

            <Splitter />

            <MiniToolbar $h={47}>
              <Glyph w={52} h={46} ml={43}>
                <g fill="none" stroke="#666" strokeWidth="2.5">
                  <circle cx="20" cy="20" r="18" fill="#f8f8f8" strokeWidth="3" />
                  <ellipse cx="20" cy="20" rx="9" ry="18" />
                  <path d="M3 14H37M3 26H37" />
                </g>
                <path d="M33 14H44V27H51L38.5 40L26 27H33Z" fill="#25b35f" stroke="#f8f8f8" strokeWidth="1" />
                <rect x="27" y="41" width="25" height="5" fill="#25b35f" />
              </Glyph>
              <MiniSep $ml={16} />
              <Glyph w={44} h={44} ml={16}>
                <path d="M2 30V2H17L24 9" fill="#f8f8f8" stroke="#c6c6c6" strokeWidth="2.5" />
                <path d="M18 15H31L42 25V43H18Z" fill="#f8f8f8" stroke="#bdbdbd" strokeWidth="3" />
              </Glyph>
              <Glyph w={44} h={44} ml={18}>
                <path d="M8 6H2V35H14M26 6H32" fill="none" stroke="#c6c6c6" strokeWidth="2.5" />
                <rect x="11" y="2" width="11" height="6" fill="#c6c6c6" />
                <path d="M18 15H31L42 25V43H18Z" fill="#f8f8f8" stroke="#bdbdbd" strokeWidth="3" />
              </Glyph>
              <MiniSep $ml={19} />
              <Glyph w={46} h={44} ml={18}>
                <path d="M0 2H40V34H0Z" fill="#cacaca" />
                <path d="M10 8H30V12H24V24H30V28H10V24H16V12H10Z" fill="#f8f8f8" />
                <path d="M26 26H33V19H38V26H45V31H38V42H33V31H26Z" fill="#bdbdbd" stroke="#f8f8f8" strokeWidth="1" />
              </Glyph>
              <Glyph w={16} h={44} ml={14}>
                <path d="M8 0L10 5L15 3L12 8L16 12L11 12L10 18H6L5 12L0 12L4 8L1 3L6 5Z" fill="#c6c6c6" />
                <rect x="6" y="26" width="5" height="18" fill="#c6c6c6" />
              </Glyph>
            </MiniToolbar>

            <PreviewBox>
              <PreviewItems>
                <Glyph w={156} h={122} ml={16}>
                  <path d="M0 6C0 2 2 0 5 0H54L66 12H130C132 12 133 14 133 16V110C133 118 130 122 126 122H6C2 122 0 118 0 114Z" fill="#a8956f" />
                  <path d="M10 11H50L62 24H124V42H38L10 115Z" fill="#b9d6f7" />
                  <path d="M36 44C38 42 40 41 44 41H150C154 41 156 43 155 46L136 115C135 120 131 122 127 122H8C6 122 6 120 7 116Z" fill="#a8956f" />
                </Glyph>
                <ItemCaption>Axialis Icons</ItemCaption>
              </PreviewItems>
              <VScroll>
                <ArrowSlot $h={45}>
                  <Chevron d="M2 14L10 5L18 14" w={20} h={18} />
                </ArrowSlot>
                <VThumb />
                <ArrowSlot $h={45}>
                  <Chevron d="M2 4L10 13L18 4" w={20} h={18} />
                </ArrowSlot>
              </VScroll>
            </PreviewBox>
          </LeftPanel>

          <Canvas />

          <ToolColumn>
            <ToolPanel>
              <ToolGrid $top={15} $bottom={13}>
                {drawTools.map((tool, i) => (
                  <Glyph key={i} w={48} h={46}>{tool}</Glyph>
                ))}
              </ToolGrid>
              <ToolSep />
              <ToolGrid $top={10} $bottom={13}>
                {brushTools.map((tool, i) => (
                  <Glyph key={i} w={46} h={46}>{tool}</Glyph>
                ))}
              </ToolGrid>
              <ToolSep />
              <ToolGrid $top={11} $bottom={12}>
                {gradients.map((fill) => (
                  <GradientSwatch key={fill} $fill={fill} />
                ))}
              </ToolGrid>
              <ToolSep />
              <ToolGrid $top={12} $bottom={0}>
                {effectTools.map((tool, i) =>
                  i === 3 ? (
                    <EffectLetter key={i}>A</EffectLetter>
                  ) : i === 4 ? (
                    <EffectLetter key={i} $italic>f</EffectLetter>
                  ) : (
                    <Glyph key={i} w={46} h={46}>{tool}</Glyph>
                  )
                )}
              </ToolGrid>
            </ToolPanel>

            <ColorPanel>
              <ColorTools>
                <Glyph w={46} h={44} ml={7}>
                  <g transform="translate(0 6) scale(0.72 0.8)">
                    <FolderOpen body="#e69f4e" inner="#f8f8f8" />
                  </g>
                  <circle cx="33" cy="12" r="12" fill="#2aa868" />
                  <path d="M28 8L37 16M38 9V17H30" fill="none" stroke="#fff" strokeWidth="2.5" />
                </Glyph>
                <Glyph w={42} h={42} ml={17}>
                  <path d="M0 0H42V42H6L0 36Z" fill="#8c52a8" />
                  <rect x="8" y="4" width="26" height="16" fill="#fff" />
                  <path d="M11 9H31M11 14H31" stroke="#8c52a8" strokeWidth="2" />
                  <rect x="12" y="27" width="22" height="15" fill="#fff" />
                  <rect x="16" y="30" width="7" height="12" fill="#8c52a8" />
                </Glyph>
                <Glyph w={44} h={44} ml={22}>
                  <path d="M1 1H24L34 11V41H1Z" fill="#fff" stroke="#666" strokeWidth="2" />
                  <path d="M18 25H26V17H34V25H43V33H34V43H26V33H18Z" fill="#2fa85c" />
                </Glyph>
                <Glyph w={44} h={44} ml={19}>
                  <path d="M1 1H24L36 12V41H1Z" fill="#fff" stroke="#666" strokeWidth="2" />
                  <rect x="18" y="28" width="25" height="8" fill="#b24f1e" />
                </Glyph>
                <Glyph w={42} h={42} ml={15}>
                  <defs>
                    <linearGradient id="band-a">
                      <stop offset="0" stopColor="#5a5ae8" />
                      <stop offset="0.6" stopColor="#e040e8" />
                      <stop offset="1" stopColor="#f07070" />
                    </linearGradient>
                    <linearGradient id="band-b">
                      <stop offset="0" stopColor="#fff" />
                      <stop offset="1" stopColor="#4a9be0" />
                    </linearGradient>
                    <linearGradient id="band-c">
                      <stop offset="0" stopColor="#fff" />
                      <stop offset="1" stopColor="#666" />
                    </linearGradient>
                  </defs>
                  <rect x="1" y="1" width="40" height="9" fill="url(#band-a)" stroke="#666" strokeWidth="2" />
                  <rect x="1" y="17" width="40" height="8" fill="url(#band-b)" stroke="#666" strokeWidth="2" />
                  <rect x="1" y="32" width="40" height="9" fill="url(#band-c)" stroke="#666" strokeWidth="2" />
                </Glyph>
                <Glyph w={34} h={38} ml={24}>
                  <path d="M0 3H34M0 13.5H34M0 24H34M0 34H34" stroke="#555" strokeWidth="4.5" />
                </Glyph>
              </ColorTools>

              <Palette>
                {paletteColors.map((color, i) => (
                  <PaletteCell key={i} style={{ background: color }} />
                ))}
              </Palette>

              <SliderRows>
                {sliders.map((s) => (
                  <SliderRow key={s.name}>
                    <SliderLabel>{s.name}</SliderLabel>
                    <SliderTrack>
                      <SliderThumb style={{ left: 7 + (s.value / 255) * 249 }} />
                    </SliderTrack>
                    <ValueBox>{s.value}</ValueBox>
                  </SliderRow>
                ))}
              </SliderRows>

              <ColorInfo>
                <SwatchStack>
                  <BackSwatch />
                  <ForeSwatch />
                  <SwapArrows>
                    <Glyph w={32} h={30}>
                      <path d="M4 6H24C28 6 28 10 28 14V24" fill="none" stroke="#333" strokeWidth="3" />
                      <path d="M9 0V12L1 6ZM22 22H33L28 30Z" fill="#333" />
                    </Glyph>
                  </SwapArrows>
                </SwatchStack>
                <Readout>
                  <span>R :</span><span>0</span>
                  <span>G :</span><span>0</span>
                  <span>B :</span><span>0</span>
                </Readout>
                <HtmlColumn>
                  HTML:
                  <HtmlInput>000000</HtmlInput>
                </HtmlColumn>
              </ColorInfo>
            </ColorPanel>
          </ToolColumn>

          <PreviewColumn>
            <PreviewArea>
              <PreviewFrame />
            </PreviewArea>
          </PreviewColumn>
        </Main>

        <StatusBar />

        <WatermarkGray>PC</WatermarkGray>
        <WatermarkScript>Winnaga</WatermarkScript>
        <WatermarkFrame>
          <WatermarkLetters>PC</WatermarkLetters>
        </WatermarkFrame>
        <WatermarkDot />
      </Window>
    </>
  );
};

export default App;
